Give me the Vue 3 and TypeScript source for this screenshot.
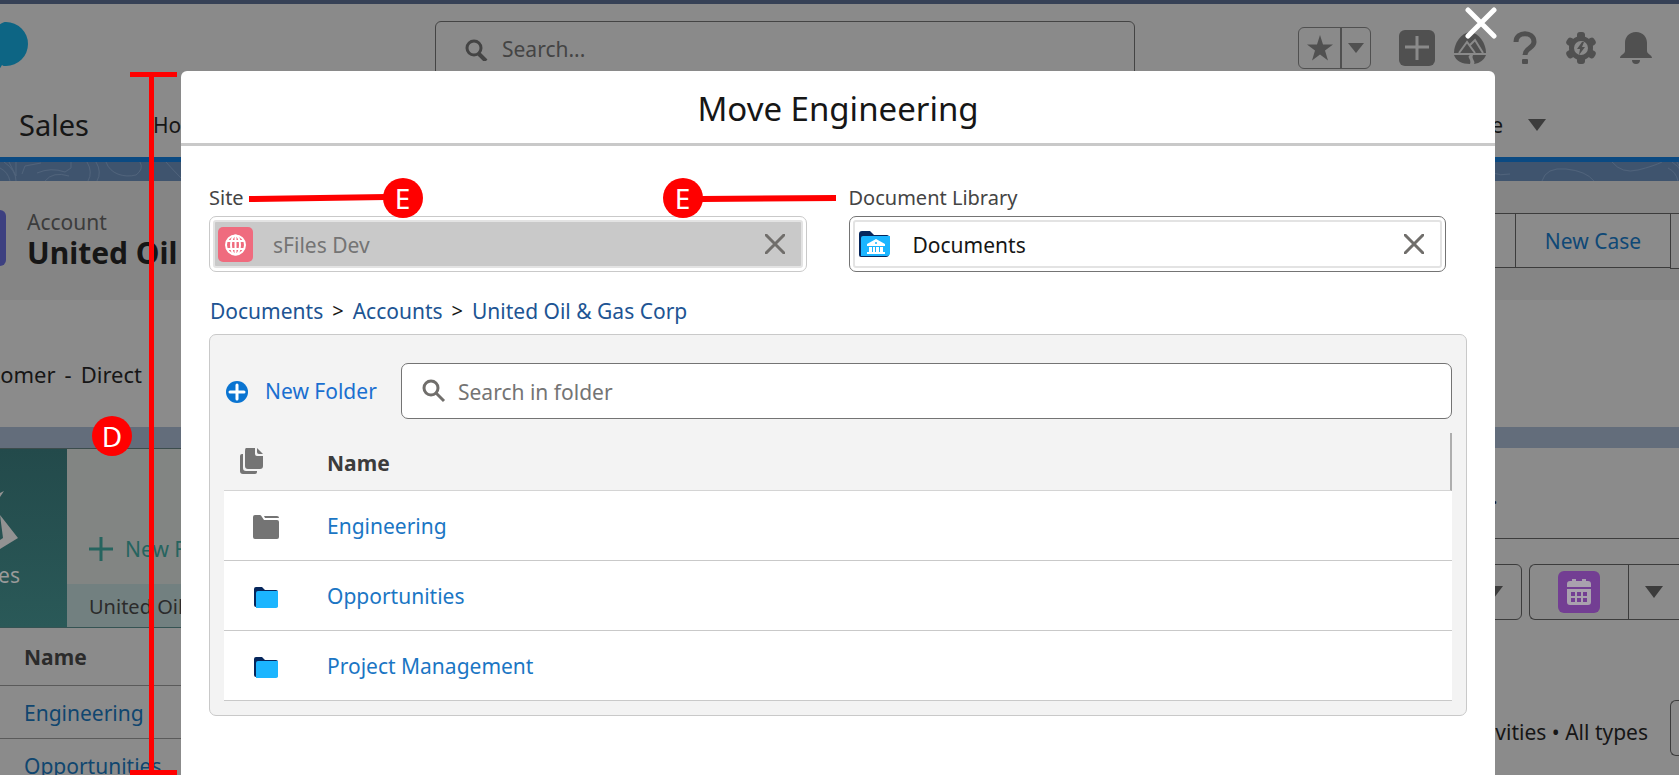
<script setup lang="ts">
import { ref } from 'vue'

interface FolderRow {
  name: string
  kind: 'plain' | 'library'
}

const site = ref('sFiles Dev')
const library = ref('Documents')
const folderQuery = ref('')
const globalQuery = ref('')

const crumbs: string[] = ['Documents', 'Accounts', 'United Oil & Gas Corp']
const rows: FolderRow[] = [
  { name: 'Engineering', kind: 'plain' },
  { name: 'Opportunities', kind: 'library' },
  { name: 'Project Management', kind: 'library' },
]
const fileRows: string[] = ['Engineering', 'Opportunities']
</script>

<template>
  <div class="screen">
    <div class="page">
      <div class="topbar"></div>
      <header class="head">
        <svg class="logo" width="30" height="50" viewBox="0 0 30 50" aria-hidden="true">
          <path d="M-2 4C1 1 4 0 6 0a21 21 0 0 1 0 44c-2 0-3 0-4-1l-3 5z" fill="#0d6584" />
        </svg>
        <label class="gsearch">
          <svg width="24" height="24" viewBox="0 0 24 24" aria-hidden="true">
            <circle cx="10" cy="11" r="7" fill="none" stroke="#444" stroke-width="3" />
            <path d="M15 17l7 7" stroke="#444" stroke-width="4" />
          </svg>
          <input v-model="globalQuery" type="search" placeholder="Search..." aria-label="Search" />
        </label>
        <div class="tools">
          <div class="fav">
            <button aria-label="Favorites">
              <svg width="26" height="26" viewBox="0 0 26 26"><path d="M13 0l3 9.500h10l-8 6 3 10L13 19.500 5 25.500l3-10-8-6h10z" fill="#505050" /></svg>
            </button>
            <button aria-label="Favorites list">
              <svg width="16" height="10" viewBox="0 0 16 10"><path d="M0 0h16L8 10z" fill="#505050" /></svg>
            </button>
          </div>
          <button class="tool add" aria-label="Add">
            <svg width="36" height="36" viewBox="0 0 36 36"><rect width="36" height="36" rx="6" fill="#505050" /><path d="M18 6v24M6 17h24" stroke="#8a8a8a" stroke-width="3" /></svg>
          </button>
          <button class="tool trail" aria-label="Guidance">
            <svg width="34" height="34" viewBox="0 0 34 34">
              <path d="M1 22C1 12 8 2 17 1c9 1 16 11 16 21z" fill="#505050" />
              <path d="M1 24h16c-4 2 2 4 0 9C9 33 3 30 1 24zM20 24h13c-2 5-6 8-12 9 2-3-3-5-1-9z" fill="#505050" />
              <path d="M6 22l8-11 8 11M17 14l5-5 8 13" fill="none" stroke="#8a8a8a" stroke-width="2" />
            </svg>
          </button>
          <button class="tool help" aria-label="Help">
            <svg width="24" height="34" viewBox="0 0 24 34"><path d="M3 11c0-11 18-11 18 0 0 6-9 6-9 13" fill="none" stroke="#505050" stroke-width="5" /><rect x="9" y="28" width="6" height="5" rx="1" fill="#505050" /></svg>
          </button>
          <button class="tool setup" aria-label="Setup">
            <svg width="32" height="34" viewBox="0 0 32 34">
              <g fill="#505050"><circle cx="16" cy="17" r="12" /><g v-for="a in [0, 60, 120]" :key="a"><rect x="12" y="1" width="8" height="32" rx="3" :transform="`rotate(${a} 16 17)`" /></g></g>
              <circle cx="16" cy="17" r="7" fill="#8a8a8a" />
              <path d="M17 11l-5 7h3l-1 6 6-8h-3l2-5z" fill="#505050" />
            </svg>
          </button>
          <button class="tool" aria-label="Notifications">
            <svg width="34" height="34" viewBox="0 0 34 34"><path d="M17 1c7 0 11 5 11 11v8c0 3 5 4 5 7H1c0-3 5-4 5-7v-8C6 6 10 1 17 1zM13 29h8a4 4 0 0 1-8 0z" fill="#505050" /></svg>
          </button>
        </div>
      </header>
      <nav class="nav">
        <span class="app">Sales</span>
        <a href="#home">Home</a>
        <button class="more">More
          <svg width="18" height="12" viewBox="0 0 18 12" aria-hidden="true"><path d="M0 0h18L9 12z" fill="#3c3c3c" /></svg>
        </button>
      </nav>
      <svg class="topo" height="19" width="100%" aria-hidden="true">
        <defs>
          <pattern id="topo" width="556" height="19" patternUnits="userSpaceOnUse">
            <g fill="none" stroke="#50637b" stroke-width="1">
              <path d="M0 6q8 4 10 13M4 0q12 8 12 19M9 0l7 14V0M22 12l3-8 16-3M37 11q14-6 28-1l6-4V0M45 19q8-10 24-5M87 0q6 10 1 19M96 0q6 10 1 19M106 0c4 12 18 16 30 13q8-6 4-13M152 0q-4 8 1 19M166 0q7 8 15 16" />
              <path d="M215 0q14 14 34 10t30-10M300 19q10-16 28-10t20 10M370 0q8 16 28 12M430 19q4-14 24-12t28 12M500 0q10 12 26 8t24-8" />
            </g>
          </pattern>
        </defs>
        <rect width="100%" height="19" fill="#3f546e" />
        <rect width="100%" height="19" fill="url(#topo)" />
      </svg>
      <section class="record">
        <div class="record-head">
          <span class="record-icon"></span>
          <div class="record-name">
            <span>Account</span>
            <strong>United Oil</strong>
          </div>
          <div class="record-actions">
            <button class="blank" aria-label="Action"></button>
            <button>New Case</button>
            <button class="menu" aria-label="More actions"></button>
          </div>
        </div>
        <div class="record-body"><span>Customer</span><span>-</span><span>Direct</span></div>
      </section>
      <div class="columns">
        <section class="files">
          <div class="files-top">
            <div class="brand">
              <svg width="20" height="64" viewBox="0 0 20 64" aria-hidden="true"><path d="M0 4l4-2-4 6zM0 26l18 23L0 60v-9l3-2z" fill="#929292" /></svg>
              <span>sFiles</span>
            </div>
            <div class="files-bar">
              <button class="files-new">
                <svg width="24" height="24" viewBox="0 0 24 24" aria-hidden="true"><path d="M12 0v24M0 12h24" stroke="#26645f" stroke-width="3" /></svg>
                New Folder
              </button>
              <div class="files-path">United Oil</div>
            </div>
          </div>
          <table class="files-table">
            <thead><tr><th>Name</th></tr></thead>
            <tbody><tr v-for="r in fileRows" :key="r"><td><a href="#file">{{ r }}</a></td></tr></tbody>
          </table>
        </section>
        <section class="activity">
          <div class="tabs"><span>…</span></div>
          <div class="composer">
            <button class="call" aria-label="More call options">
              <svg width="18" height="12" viewBox="0 0 18 12"><path d="M0 0h18L9 12z" fill="#3c3c3c" /></svg>
            </button>
            <div class="event">
              <button aria-label="New event">
                <svg width="42" height="42" viewBox="0 0 42 42">
                  <rect width="42" height="42" rx="6" fill="#733e93" />
                  <path d="M9 16v-3q0-3 3-3h2V8h4v2h6V8h4v2h2q3 0 3 3v3zM9 18h24v13q0 3-3 3H12q-3 0-3-3z" fill="#a9a1ae" />
                  <path d="M13 21h4v4h-4zM19 21h4v4h-4zM25 21h4v4h-4zM13 27h4v4h-4zM19 27h4v4h-4zM25 27h4v4h-4z" fill="#733e93" />
                </svg>
              </button>
              <button class="caret" aria-label="More event options">
                <svg width="18" height="12" viewBox="0 0 18 12"><path d="M0 0h18L9 12z" fill="#3c3c3c" /></svg>
              </button>
            </div>
          </div>
          <div class="filters">
            <span>All activities • All types</span>
            <button aria-label="Filter"></button>
          </div>
        </section>
      </div>
    </div>

    <button class="close" aria-label="Close">
      <svg width="32" height="32" viewBox="0 0 32 32"><path d="M3 3l26 26M29 3L3 29" stroke="#fff" stroke-width="5" stroke-linecap="round" /></svg>
    </button>

    <div class="modal" role="dialog" aria-labelledby="modal-title">
      <h1 id="modal-title">Move Engineering</h1>
      <div class="modal-body">
        <div class="fields">
          <div class="field">
            <div class="label-row">
              <label for="site">Site</label>
              <span class="callout">
                <svg width="137" height="10" viewBox="0 0 137 10" aria-hidden="true"><path d="M0 3l137-2v6L0 9z" fill="#f00" /></svg>
                <b class="dot">E</b>
              </span>
            </div>
            <div class="pill off">
              <div class="inner">
                <svg width="35" height="35" viewBox="0 0 35 35" aria-hidden="true">
                  <rect width="35" height="35" rx="5" fill="#ef6b7e" />
                  <g fill="none" stroke="#fff" stroke-width="2"><circle cx="17.500" cy="18" r="9.500" /><ellipse cx="17.500" cy="18" rx="4.500" ry="9.500" /><path d="M17.500 8v20M9 14h17M9 22h17" /></g>
                </svg>
                <input id="site" v-model="site" type="text" disabled />
                <button aria-label="Clear site" disabled>
                  <svg width="20" height="20" viewBox="0 0 20 20"><path d="M1 1l18 18M19 1L1 19" stroke="#706e6b" stroke-width="3" stroke-linecap="round" /></svg>
                </button>
              </div>
            </div>
          </div>
          <div class="field">
            <div class="label-row">
              <span class="callout before">
                <b class="dot">E</b>
                <svg width="134" height="10" viewBox="0 0 134 10" aria-hidden="true"><path d="M0 3l134-1v6L0 9z" fill="#f00" /></svg>
              </span>
              <label for="library">Document Library</label>
            </div>
            <div class="pill">
              <div class="inner">
                <svg width="35" height="35" viewBox="0 0 35 35" aria-hidden="true">
                  <path d="M1 7q0-3 3-3h8l4 4h13q2 0 2 2v17q0 3-3 3H3q-2 0-2-2z" fill="#06265c" />
                  <path d="M5 9h27v17q0 3-3 3H3V11q0-2 2-2z" fill="#1bb5ff" />
                  <path d="M9 17l9-5 9 5v2H9zM11 20h3v5h-3zM15 20h2v5h-2zM18 20h3v5h-3zM22 20h3v5h-3zM9 25h18v2H9z" fill="#fff" />
                  <circle cx="18" cy="16" r="1" fill="#1bb5ff" />
                </svg>
                <input id="library" v-model="library" type="text" />
                <button aria-label="Clear document library">
                  <svg width="20" height="20" viewBox="0 0 20 20"><path d="M1 1l18 18M19 1L1 19" stroke="#706e6b" stroke-width="3" stroke-linecap="round" /></svg>
                </button>
              </div>
            </div>
          </div>
        </div>

        <nav class="crumbs" aria-label="Folder path">
          <template v-for="(c, i) in crumbs" :key="c">
            <span v-if="i > 0">&gt;</span>
            <a href="#folder">{{ c }}</a>
          </template>
        </nav>

        <section class="browser">
          <div class="browser-bar">
            <button class="new-folder">
              <svg width="24" height="24" viewBox="0 0 24 24" aria-hidden="true"><circle cx="12" cy="12" r="11" fill="#0a74d1" /><path d="M12 5v14M5 12h14" stroke="#fff" stroke-width="3" stroke-linecap="round" /></svg>
              <span>New Folder</span>
            </button>
            <label class="fsearch">
              <svg width="24" height="24" viewBox="0 0 24 24" aria-hidden="true"><circle cx="9" cy="9" r="7" fill="none" stroke="#706e6b" stroke-width="3" /><path d="M14 14l8 8" stroke="#706e6b" stroke-width="3" /></svg>
              <input v-model="folderQuery" type="search" placeholder="Search in folder" aria-label="Search in folder" />
            </label>
          </div>
          <table class="folders">
            <thead>
              <tr>
                <th class="icon-cell">
                  <svg width="26" height="28" viewBox="0 0 26 28" role="img" aria-label="Type">
                    <path d="M7 1h9v6q0 2 2 2h6v10q0 3-3 3H9q-3 0-3-3V4q0-3 1-3z" fill="#747474" />
                    <path d="M18 1l6 6h-4q-2 0-2-2z" fill="#747474" />
                    <path d="M4 7H3q-2 0-2 2v15q0 3 3 3h12q2 0 2-2v-1H7q-3 0-3-3z" fill="#747474" />
                  </svg>
                </th>
                <th>Name</th>
              </tr>
            </thead>
            <tbody>
              <tr v-for="row in rows" :key="row.name">
                <td class="icon-cell">
                  <svg v-if="row.kind === 'plain'" width="26" height="25" viewBox="0 0 26 25" aria-hidden="true">
                    <path d="M0 2q0-2 2-2h5q1 0 2 2l2 3h13q2 0 2 2v15q0 2-2 2H2q-2 0-2-2z" fill="#747474" />
                    <path d="M11 1h13q2 0 2 2H12z" fill="#747474" />
                  </svg>
                  <svg v-else width="26" height="25" viewBox="0 0 26 25" aria-hidden="true">
                    <path d="M1 4q0-2 2-2h6l3 3h11q2 0 2 2v13q0 2-2 2H3q-2 0-2-2z" fill="#06265c" />
                    <path d="M5 6h20v15q0 2-2 2H3V8q0-2 2-2z" fill="#1bb5ff" />
                  </svg>
                </td>
                <td><a href="#folder">{{ row.name }}</a></td>
              </tr>
            </tbody>
          </table>
        </section>
      </div>
    </div>

    <div class="bracket" aria-hidden="true"></div>
    <b class="dot d">D</b>
  </div>
</template>

<style>
html,
body,
#app {
  height: 100%;
  margin: 0;
}
</style>

<style scoped>
.screen {
  position: relative;
  height: 100%;
  min-height: 600px;
  overflow: hidden;
  background: #636d7b;
  font-family: "Noto Sans", "Open Sans", sans-serif;
  font-size: 21px;
  line-height: 28px;
  color: #161616;
}
.screen * {
  box-sizing: border-box;
}
button,
input {
  font: inherit;
  color: inherit;
  background: none;
  border: 0;
  padding: 0;
  margin: 0;
  outline: 0;
}
a {
  text-decoration: none;
}
svg {
  display: block;
  flex: none;
}

/* Dimmed record page */
.page {
  display: flex;
  flex-direction: column;
  height: 100%;
}
.topbar {
  flex: none;
  height: 4px;
  background: #364156;
}
.head {
  display: flex;
  flex: none;
  align-items: flex-start;
  height: 81px;
  padding: 17px 26px 0 0;
  background: #8a8a8a;
}
.logo {
  margin-top: 1px;
}
.gsearch {
  display: flex;
  align-items: center;
  gap: 14px;
  flex: 0 1 700px;
  height: 56px;
  margin: 0 auto 0 405px;
  padding: 0 28px;
  border: 1px solid #444;
  border-radius: 6px;
  color: #444;
}
.gsearch input {
  flex: 1;
}
.gsearch input::placeholder {
  color: #444;
  opacity: 1;
}
.tools {
  display: flex;
  align-items: center;
  padding-top: 6px;
}
.fav {
  display: flex;
  height: 42px;
  margin-right: 28px;
  border: 1px solid #505050;
  border-radius: 6px;
}
.fav button {
  display: grid;
  place-items: center;
  width: 41px;
}
.fav button + button {
  width: 30px;
  border-left: 2px solid #505050;
}
.add {
  margin-right: 18px;
}
.trail {
  margin-right: 26px;
}
.help {
  margin-right: 28px;
}
.setup {
  margin-right: 22px;
}
.nav {
  display: flex;
  flex: none;
  align-items: center;
  height: 77px;
  padding: 8px 133px 0 19px;
  background: #8a8a8a;
  border-bottom: 5px solid #0b4a82;
}
.nav .app {
  font-size: 29px;
  line-height: 40px;
}
.nav a {
  margin-left: 64px;
  color: #161616;
}
.more {
  display: flex;
  align-items: center;
  gap: 25px;
  margin-left: auto;
}
.topo {
  display: block;
  flex: none;
}
.record {
  flex: none;
  background: #8b8b8b;
  height: 246px;
}
.record-head {
  display: flex;
  height: 119px;
  padding-top: 29px;
  background: #858585;
}
.record-icon {
  width: 6px;
  height: 56px;
  border-radius: 0 6px 6px 0;
  background: #3d4080;
}
.record-name {
  display: flex;
  flex-direction: column;
  padding-left: 21px;
}
.record-name span {
  color: #3c3c3c;
  line-height: 24px;
}
.record-name strong {
  font-size: 30px;
  line-height: 38px;
}
.record-actions {
  display: flex;
  align-items: flex-start;
  margin: 3px 0 0 auto;
}
.record-actions button {
  width: 155px;
  height: 55px;
  border: solid #3c3c3c;
  border-width: 1px 0 1px 1px;
  background: #8b8b8b;
  color: #0f4876;
}
.record-actions .menu {
  width: 9px;
  height: 56px;
}
.record-body {
  display: flex;
  gap: 9px;
  width: 142px;
  height: 127px;
  padding-top: 60px;
  justify-content: flex-end;
  white-space: nowrap;
  font-size: 22px;
}
.columns {
  display: flex;
  flex: 1;
  justify-content: space-between;
  margin-top: 21px;
  min-height: 0;
}
.files {
  width: 1100px;
  background: #8b8b8b;
  border-top: 1px solid #3c4c4c;
}
.files-top {
  display: flex;
  height: 179px;
  border-bottom: 1px solid #355353;
}
.brand {
  display: flex;
  flex-direction: column;
  align-items: flex-start;
  width: 67px;
  padding-top: 40px;
  background: linear-gradient(#234a4b, #2a5958);
  color: #9a9a9a;
}
.brand span {
  width: 20px;
  margin-top: 8px;
  display: flex;
  justify-content: flex-end;
}
.files-bar {
  display: flex;
  flex-direction: column;
  flex: 1;
  background: #828583;
}
.files-new {
  display: flex;
  align-items: center;
  gap: 12px;
  margin: 86px auto 0 22px;
  color: #26645f;
}
.files-path {
  margin-top: auto;
  height: 43px;
  padding: 9px 22px;
  background: #728080;
  color: #2b2b2b;
  font-size: 20px;
}
.files-table {
  width: 100%;
  border-collapse: collapse;
}
.files-table th,
.files-table td {
  padding: 2px 24px 0;
  height: 53px;
  text-align: left;
  border-bottom: 1px solid #5a5a5a;
}
.files-table th {
  height: 57px;
  color: #2b2b2b;
}
.files-table a {
  color: #10466f;
}
.activity {
  width: 400px;
  background: #8b8b8b;
}
.tabs {
  height: 91px;
  padding: 34px 0 0 202px;
  border-bottom: 1px solid #3c3c3c;
}
.composer {
  display: flex;
  gap: 7px;
  justify-content: flex-end;
  padding-top: 25px;
}
.composer .call {
  display: flex;
  align-items: center;
  justify-content: flex-end;
  width: 80px;
  padding-right: 18px;
  border: 1px solid #3c3c3c;
  border-radius: 6px;
}
.event {
  display: flex;
  height: 56px;
  border: 1px solid #3c3c3c;
  border-right: 0;
  border-radius: 6px 0 0 6px;
}
.event button {
  display: grid;
  place-items: center;
  width: 98px;
}
.event .caret {
  width: 51px;
  border-left: 1px solid #3c3c3c;
}
.filters {
  display: flex;
  align-items: flex-start;
  justify-content: flex-end;
  gap: 22px;
  padding-top: 80px;
}
.filters span {
  padding-top: 18px;
}
.filters button {
  width: 9px;
  height: 56px;
  border: 1px solid #3c3c3c;
  border-right: 0;
  border-radius: 6px 0 0 6px;
}

/* Dialog */
.close {
  position: absolute;
  top: 7px;
  right: 182px;
}
.modal {
  position: absolute;
  top: 71px;
  right: 184px;
  bottom: 0;
  left: 181px;
  background: #fff;
  border-radius: 6px 6px 0 0;
}
.modal h1 {
  margin: 0;
  padding: 16px 0 12px;
  border-bottom: 3px solid #c9c9c9;
  font-size: 33px;
  line-height: 44px;
  font-weight: 400;
  text-align: center;
}
.modal-body {
  padding: 38px 28px 0;
}
.fields {
  display: grid;
  grid-template-columns: 1fr 1fr;
  gap: 42px;
  padding-right: 21px;
}
.label-row {
  position: relative;
  display: flex;
  align-items: center;
  gap: 5px;
  height: 28px;
  margin-bottom: 4px;
  font-size: 20px;
  color: #444;
}
.callout {
  display: flex;
  align-items: center;
}
.callout .dot {
  margin: 0 0 0 -3px;
}
.callout.before {
  position: absolute;
  right: 100%;
  margin-right: 13px;
}
.callout.before .dot {
  margin: 0 -1px 0 0;
}
.dot {
  display: grid;
  place-items: center;
  flex: none;
  width: 40px;
  height: 40px;
  border-radius: 50%;
  background: #f00;
  color: #fff;
  font-size: 28px;
  line-height: 40px;
  font-weight: 400;
}
.pill {
  padding: 3px;
  border: 1px solid #747474;
  border-radius: 7px;
}
.pill.off {
  border-color: #c9c9c9;
}
.inner {
  display: flex;
  align-items: center;
  height: 48px;
  padding: 0 16px 0 3px;
  border: 2px solid #e3e3e3;
  border-radius: 3px;
}
.off .inner {
  background: #c9c9c9;
}
.inner input {
  flex: 1;
  min-width: 0;
  margin-left: 20px;
  padding-top: 2px;
}
.inner input:disabled {
  color: #747474;
}
.crumbs {
  display: flex;
  gap: 9px;
  margin: 25px 0 9px 1px;
  white-space: nowrap;
}
.crumbs a {
  color: #205493;
}
.crumbs span {
  font-size: 20px;
}
.browser {
  padding: 28px 14px 14px;
  border: 1px solid #c9c9c9;
  border-radius: 7px;
  background: #f3f3f3;
}
.browser-bar {
  display: flex;
  align-items: center;
}
.new-folder {
  display: flex;
  align-items: center;
  gap: 16px;
  width: 177px;
  padding: 2px 0 0 1px;
  color: #1a6fd0;
  white-space: nowrap;
}
.new-folder span {
  padding-bottom: 3px;
}
.fsearch {
  display: flex;
  align-items: center;
  gap: 12px;
  flex: 1;
  height: 56px;
  padding-left: 20px;
  border: 1px solid #747474;
  border-radius: 7px;
  background: #fff;
}
.fsearch input {
  flex: 1;
  padding-top: 2px;
}
.fsearch input::placeholder {
  color: #747474;
  opacity: 1;
}
.folders {
  width: 100%;
  margin-top: 14px;
  border-spacing: 0;
  background: #fff;
}
.folders th {
  height: 58px;
  padding: 2px 0 0;
  background: #f3f3f3;
  border-bottom: 1px solid #d4d4d4;
  color: #3c3c3c;
  text-align: left;
}
.folders th:last-child {
  border-right: 2px solid #aeaeae;
}
.folders td {
  height: 70px;
  padding: 0;
  border-bottom: 1px solid #c9c9c9;
}
.folders td a {
  color: #1b76c4;
}
.folders .icon-cell {
  width: 103px;
  padding: 4px 0 0 29px;
}
.folders th.icon-cell {
  padding: 0 0 2px 15px;
}

/* Height marker beside the dialog */
.bracket {
  position: absolute;
  top: 72px;
  bottom: 0;
  left: 130px;
  width: 47px;
  border: solid #f00;
  border-width: 5px 0;
  background: linear-gradient(#f00, #f00) 19px 0 / 5px 100% no-repeat;
}
.dot.d {
  position: absolute;
  top: 416px;
  left: 92px;
}
</style>
